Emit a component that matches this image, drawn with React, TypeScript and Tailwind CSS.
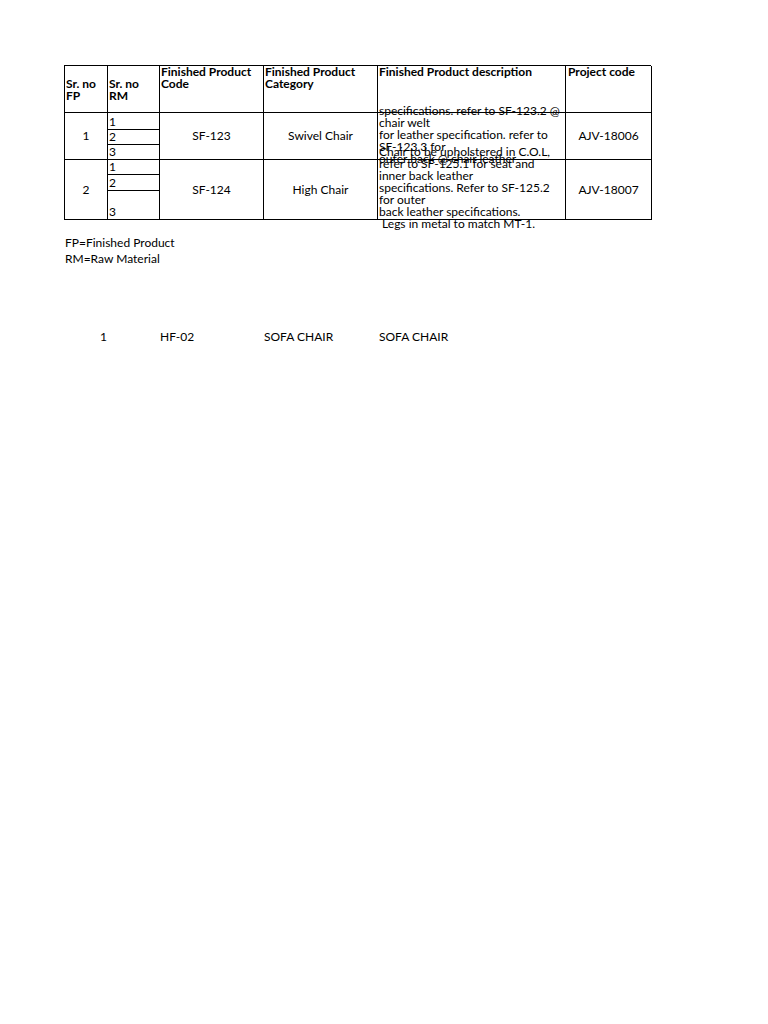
import React from "react";

const font = { fontFamily: "Lato, 'Open Sans', 'Liberation Sans', sans-serif" };

export default function App() {
  const row1Desc = [
    "specifications. refer to SF-123.2 @",
    "chair welt",
    "for leather specification. refer to",
    "SF-123.3 for",
    "outer back @ chair leather",
  ];
  const row2Desc = [
    "Chair to be upholstered in C.O.L,",
    "refer to SF-125.1 for seat and",
    "inner back leather",
    "specifications. Refer to SF-125.2",
    "for outer",
    "back leather specifications.",
    "\u00a0Legs in metal to match MT-1.",
  ];
  const cell = "border-r border-b border-black";
  return (
    <div className="w-[768px] h-[1024px] bg-white text-black text-[12px] leading-[12px]" style={font}>
      <div className="pt-[65px] pl-[64px]">
        <div className="grid w-[587px] grid-cols-[43px_52px_104px_114px_188px_86px] grid-rows-[47px_47px_60px] border-l border-t border-black">
          {/* header */}
          <div className={`${cell} flex items-center pl-[1px] pt-[1px] font-bold`}>
            <div>Sr. no<br />FP</div>
          </div>
          <div className={`${cell} flex items-center pl-[1px] pt-[1px] font-bold`}>
            <div>Sr. no<br />RM</div>
          </div>
          <div className={`${cell} pl-[1px] font-bold`}>Finished Product<br />Code</div>
          <div className={`${cell} pl-[1px] font-bold`}>Finished Product<br />Category</div>
          <div className={`${cell} pl-[1px] font-bold`}>Finished Product description</div>
          <div className={`${cell} pl-[2px] font-bold`}>Project code</div>

          {/* row 1 */}
          <div className={`${cell} flex items-center justify-center`}>1</div>
          <div className={`${cell} flex flex-col`}>
            <div className="h-[17px] border-b border-black flex items-end pl-[1px] pb-[1px]">1</div>
            <div className="h-[15px] border-b border-black flex items-end pl-[1px] pb-[1px]">2</div>
            <div className="flex-1 flex items-end pl-[1px] pb-[1px]">3</div>
          </div>
          <div className={`${cell} flex items-center justify-center`}>SF-123</div>
          <div className={`${cell} flex items-center justify-center`}>Swivel Chair</div>
          <div className={`${cell} flex items-center pl-[1px] whitespace-nowrap`}>
            <div className="pb-[3px]">
              {row1Desc.map((t, i) => (
                <div key={i}>{t}</div>
              ))}
            </div>
          </div>
          <div className={`${cell} flex items-center justify-center`}>AJV-18006</div>

          {/* row 2 */}
          <div className={`${cell} flex items-center justify-center`}>2</div>
          <div className={`${cell} flex flex-col`}>
            <div className="h-[15px] border-b border-black flex items-end pl-[1px] pb-[1px]">1</div>
            <div className="h-[16px] border-b border-black flex items-end pl-[1px] pb-[1px]">2</div>
            <div className="flex-1 flex items-end pl-[1px] pb-[1px]">3</div>
          </div>
          <div className={`${cell} flex items-center justify-center`}>SF-124</div>
          <div className={`${cell} flex items-center justify-center`}>High Chair</div>
          <div className={`${cell} flex items-center pl-[1px] whitespace-nowrap`}>
            <div className="pb-[3px]">
              {row2Desc.map((t, i) => (
                <div key={i}>{t}</div>
              ))}
            </div>
          </div>
          <div className={`${cell} flex items-center justify-center`}>AJV-18007</div>
        </div>

        <div className="mt-[17px] pl-[1px]">
          <div className="h-[16px]">FP=Finished Product</div>
          <div className="h-[16px]">RM=Raw Material</div>
        </div>

        <div className="mt-[62px] flex">
          <div className="w-[96px] pl-[36px]">1</div>
          <div className="w-[104px]">HF-02</div>
          <div className="w-[115px]">SOFA CHAIR</div>
          <div>SOFA CHAIR</div>
        </div>
      </div>
    </div>
  );
}
